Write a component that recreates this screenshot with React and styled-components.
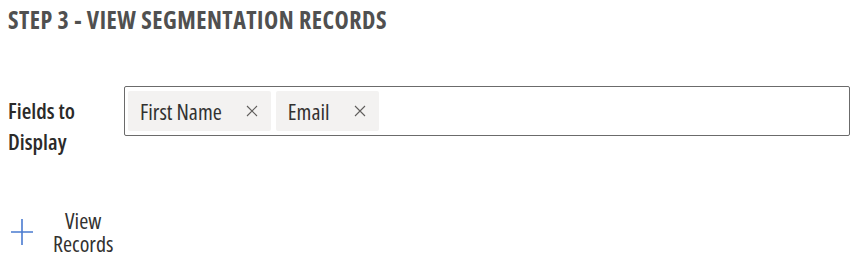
import styled, { createGlobalStyle } from 'styled-components';

const GlobalStyle = createGlobalStyle`
  html, body {
    margin: 0;
    padding: 0;
    background: #ffffff;
  }
  body {
    font-family: 'Open Sans', 'Noto Sans', sans-serif;
    font-stretch: condensed;
  }
`;

const Page = styled.div`
  padding: 5px 12px 0 8px;
  display: flex;
  flex-direction: column;
`;

const Title = styled.h2`
  margin: 0;
  font-size: 24px;
  font-weight: 700;
  line-height: 30px;
  color: #505050;
  letter-spacing: 0.5px;
`;

const FieldRow = styled.div`
  margin-top: 51px;
  display: flex;
  align-items: flex-start;
`;

const Label = styled.div`
  width: 116px;
  padding-top: 9px;
  font-size: 22px;
  line-height: 31px;
  font-weight: 600;
  color: #2b2a29;
`;

const TagBox = styled.div`
  flex: 1;
  height: 50px;
  box-sizing: border-box;
  border: 1px solid #6b6b6b;
  border-radius: 2px;
  padding: 4px 3px;
  display: flex;
  gap: 5px;
`;

const Tag = styled.div`
  display: flex;
  align-items: center;
  background: #f3f2f1;
  border-radius: 2px;
  padding: 0 13px 0 12px;
  gap: 24px;
  font-size: 22px;
  color: #323130;
`;

const RemoveIcon = styled.svg`
  width: 12px;
  height: 12px;
  stroke: #605e5c;
  stroke-width: 1.1;
`;

const ActionButton = styled.button`
  margin-top: 52px;
  align-self: flex-start;
  display: flex;
  align-items: center;
  gap: 20px;
  background: none;
  border: none;
  padding: 0 0 0 3px;
  font-family: inherit;
  font-stretch: condensed;
  cursor: pointer;
`;

const PlusIcon = styled.svg`
  width: 22px;
  height: 26px;
  stroke: #4a7bd0;
  stroke-width: 1.6;
`;

const ActionText = styled.span`
  font-size: 22px;
  line-height: 23px;
  text-align: center;
  color: #323130;
`;

const Remove = () => (
  <RemoveIcon viewBox="0 0 12 12" fill="none">
    <path d="M1 1 L11 11 M11 1 L1 11" />
  </RemoveIcon>
);

export default function App() {
  return (
    <>
      <GlobalStyle />
      <Page>
        <Title>STEP 3 - VIEW SEGMENTATION RECORDS</Title>
        <FieldRow>
          <Label>
            Fields to
            <br />
            Display
          </Label>
          <TagBox>
            <Tag>
              First Name
              <Remove />
            </Tag>
            <Tag>
              Email
              <Remove />
            </Tag>
          </TagBox>
        </FieldRow>
        <ActionButton>
          <PlusIcon viewBox="0 0 22 26" fill="none">
            <path d="M0 13 H22 M11 0 V26" />
          </PlusIcon>
          <ActionText>
            View
            <br />
            Records
          </ActionText>
        </ActionButton>
      </Page>
    </>
  );
}
